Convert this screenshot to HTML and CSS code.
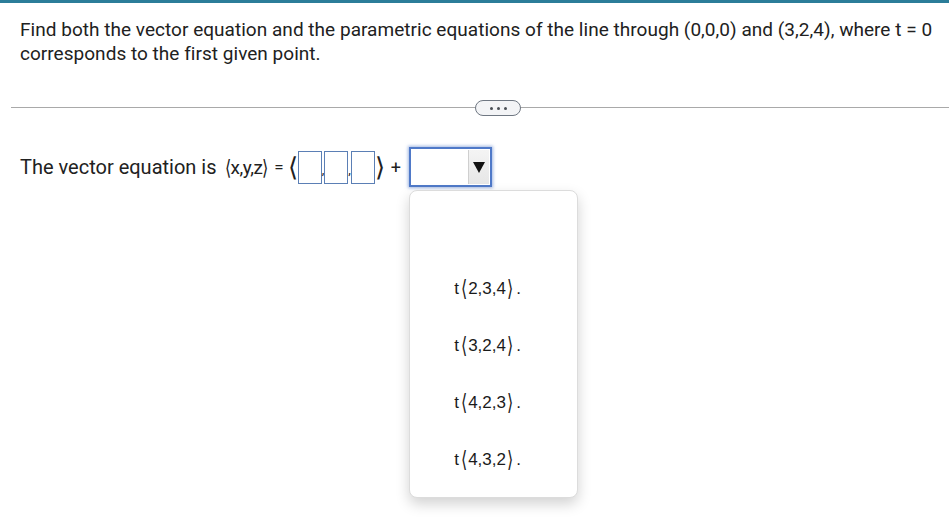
FILE: index.html
```html
<!DOCTYPE html>
<html>
<head>
<meta charset="utf-8">
<link rel="stylesheet" href="styles.css">
</head>
<body>
<div class="topbar"></div>
<p class="question">Find both the vector equation and the parametric equations of the line through (0,0,0) and (3,2,4), where t = 0 corresponds to the first given point.</p>
<div class="divider">
  <div class="rule"></div>
  <div class="pill"><span></span><span></span><span></span></div>
</div>
<div class="equation">
  <span class="label">The vector equation is</span>
  <span class="ang">⟨</span><span class="var">x,y,z</span><span class="ang">⟩</span>
  <span class="eq">=</span>
  <div class="vec">
    <span class="bigang">⟨</span><span class="box"></span><span class="comma">,</span><span class="box"></span><span class="comma">,</span><span class="box"></span><span class="bigang">⟩</span>
  </div>
  <span class="plus">+</span>
  <div class="select-wrap">
    <div class="select"><div class="arrowbtn"><div class="tri"></div></div></div>
    <div class="menu">
      <div class="opt">t<span class="oang">⟨</span>2,3,4<span class="oang">⟩</span>.</div>
      <div class="opt">t<span class="oang">⟨</span>3,2,4<span class="oang">⟩</span>.</div>
      <div class="opt">t<span class="oang">⟨</span>4,2,3<span class="oang">⟩</span>.</div>
      <div class="opt">t<span class="oang">⟨</span>4,3,2<span class="oang">⟩</span>.</div>
    </div>
  </div>
</div>
</body>
</html>
```

FILE: styles.css
```css
html, body {
  margin: 0;
  padding: 0;
  background: #fff;
}
body {
  font-family: Roboto, "Liberation Sans", sans-serif;
  color: #212121;
  min-height: 531px;
}
.topbar {
  height: 3px;
  background: #2b7d99;
}
.question {
  margin: 15px 0 0 20px;
  padding-right: 10px;
  line-height: 24px;
  font-size: 19px;
  letter-spacing: 0.03px;
  max-width: 920px;
}
.divider {
  position: relative;
  margin: 34px 0 0 11px;
  height: 16px;
  display: flex;
  align-items: center;
  justify-content: center;
}
.rule {
  position: absolute;
  left: 0;
  right: 0;
  top: 7px;
  height: 1px;
  background: #a9a9a9;
}
.pill {
  position: relative;
  left: 18px;
  width: 44px;
  height: 14px;
  border: 1px solid #6f7782;
  border-radius: 8px;
  background: #f3f4f6;
  display: flex;
  align-items: center;
  justify-content: center;
  gap: 4px;
}
.pill span {
  width: 3px;
  height: 3px;
  border-radius: 50%;
  background: #4a4f55;
}
.equation {
  display: flex;
  align-items: center;
  margin: 31px 0 0 20px;
  height: 40px;
  font-size: 20px;
}
.label { margin-right: 8px; }
.ang { font-size: 16px; display: inline-block; transform: scaleY(1.3); }
.var { font-size: 19px; letter-spacing: -0.5px; }
.eq { margin: 0 4px 0 6px; font-size: 17px; }
.vec {
  display: flex;
  align-items: center;
}
.bigang {
  font-size: 26px;
  font-weight: 300;
  line-height: 1;
}
.box {
  width: 22px;
  height: 31px;
  border: 1px solid #5b7fb5;
  background: #fff;
}
.comma {
  font-size: 13px;
  align-self: flex-end;
  margin: 0 0 7px 0;
}
.plus {
  margin: 0 8px 0 6px;
  font-size: 18px;
}
.select-wrap {
  position: relative;
}
.select {
  display: flex;
  justify-content: flex-end;
  align-items: center;
  width: 78px;
  height: 36px;
  border: 2px solid #4f79c8;
  box-shadow: 0 0 3px 1px rgba(80, 120, 200, 0.55);
  background: #fff;
  padding-right: 1px;
}
.arrowbtn {
  width: 20px;
  height: 34px;
  display: flex;
  align-items: center;
  justify-content: center;
  background: linear-gradient(#f4f4f4, #e6e6e6);
  border-left: 1px solid #cfcfcf;
}
.tri {
  width: 0;
  height: 0;
  border-left: 6px solid transparent;
  border-right: 6px solid transparent;
  border-top: 11px solid #111;
}
.menu {
  position: absolute;
  z-index: 5;
  left: 0;
  top: 43px;
  width: 169px;
  height: 308px;
  background: #fff;
  border: 1px solid #dcdcdc;
  border-radius: 8px;
  box-shadow: 0 6px 14px rgba(0, 0, 0, 0.18);
  padding: 83px 12px 0 0;
  box-sizing: border-box;
  font-family: "Liberation Sans", Arial, sans-serif;
  font-size: 17px;
  color: #1a1a1a;
  text-align: center;
}
.opt {
  height: 57px;
  line-height: 30px;
}
.oang {
  display: inline-block;
  margin: 0 1px 0 2px;
  font-size: 16px;
  font-family: Roboto, "DejaVu Sans", sans-serif;
  transform: scaleY(1.4);
}
.oang + .oang { margin: 0 3px 0 1px; }
```
